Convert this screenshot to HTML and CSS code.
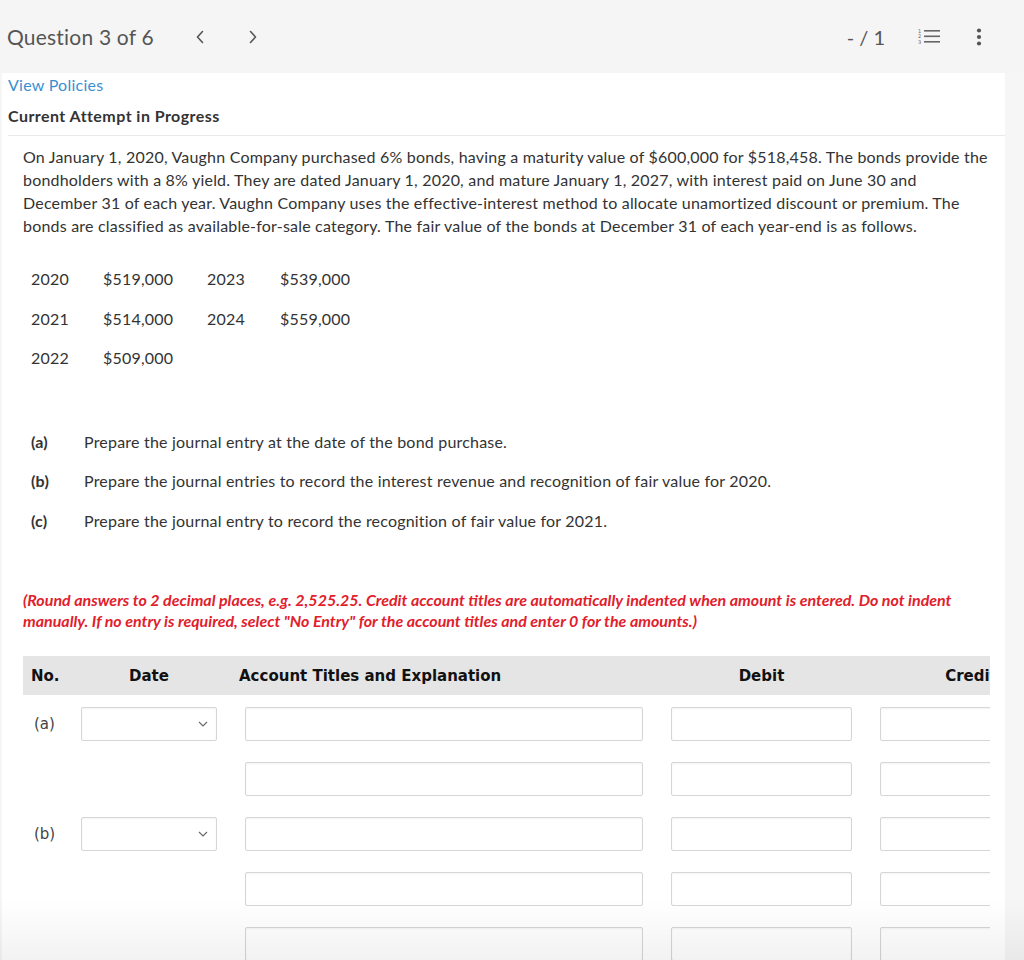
FILE: index.html
```html
<!DOCTYPE html>
<html lang="en">
<head>
<meta charset="utf-8">
<title>Question 3 of 6</title>
<link rel="stylesheet" href="styles.css">
</head>
<body>
<header class="topbar">
  <div class="qnav">
    <span class="qtitle">Question 3 of 6</span>
    <button class="navbtn prev" aria-label="Previous question">
      <svg width="10" height="14" viewBox="0 0 10 14"><path d="M7.5 1.5 L2.5 7 L7.5 12.5" fill="none" stroke="#555" stroke-width="1.6" stroke-linecap="round" stroke-linejoin="round"/></svg>
    </button>
    <button class="navbtn next" aria-label="Next question">
      <svg width="10" height="14" viewBox="0 0 10 14"><path d="M2.5 1.5 L7.5 7 L2.5 12.5" fill="none" stroke="#555" stroke-width="1.6" stroke-linecap="round" stroke-linejoin="round"/></svg>
    </button>
  </div>
  <div class="tools">
    <span class="score">- / 1</span>
    <svg class="listicon" width="22" height="17" viewBox="0 0 22 17">
      <text x="0" y="4.5" font-size="5" font-family="DejaVu Sans, sans-serif" fill="#666">1</text>
      <text x="0" y="10" font-size="5" font-family="DejaVu Sans, sans-serif" fill="#666">2</text>
      <text x="0" y="15.5" font-size="5" font-family="DejaVu Sans, sans-serif" fill="#666">3</text>
      <rect x="6" y="2" width="16" height="1.6" fill="#666"/>
      <rect x="6" y="7.5" width="16" height="1.6" fill="#666"/>
      <rect x="6" y="13" width="16" height="1.6" fill="#666"/>
    </svg>
    <svg class="dots" width="6" height="18" viewBox="0 0 6 18">
      <circle cx="3" cy="2.5" r="2.1" fill="#555"/>
      <circle cx="3" cy="9" r="2.1" fill="#555"/>
      <circle cx="3" cy="15.5" r="2.1" fill="#555"/>
    </svg>
  </div>
</header>

<main class="panel">
  <div class="attempt">
    <a class="policies" href="#">View Policies</a>
    <h2 class="status">Current Attempt in Progress</h2>
  </div>

  <section class="question">
    <p class="prompt">On January 1, 2020, Vaughn Company purchased 6% bonds, having a maturity value of $600,000 for $518,458. The bonds provide the bondholders with a 8% yield. They are dated January 1, 2020, and mature January 1, 2027, with interest paid on June 30 and December 31 of each year. Vaughn Company uses the effective-interest method to allocate unamortized discount or premium. The bonds are classified as available-for-sale category. The fair value of the bonds at December 31 of each year-end is as follows.</p>

    <div class="values">
      <span>2020</span><span>$519,000</span><span>2023</span><span>$539,000</span>
      <span>2021</span><span>$514,000</span><span>2024</span><span>$559,000</span>
      <span>2022</span><span>$509,000</span><span></span><span></span>
    </div>

    <ol class="parts">
      <li><span class="tag">(a)</span><span>Prepare the journal entry at the date of the bond purchase.</span></li>
      <li><span class="tag">(b)</span><span>Prepare the journal entries to record the interest revenue and recognition of fair value for 2020.</span></li>
      <li><span class="tag">(c)</span><span>Prepare the journal entry to record the recognition of fair value for 2021.</span></li>
    </ol>

    <p class="note">(Round answers to 2 decimal places, e.g. 2,525.25. Credit account titles are automatically indented when amount is entered. Do not indent manually. If no entry is required, select "No Entry" for the account titles and enter 0 for the amounts.)</p>

    <div class="journal">
      <div class="jgrid">
        <div class="jhead">
          <span class="hno">No.</span>
          <span class="hc">Date</span>
          <span class="hacct">Account Titles and Explanation</span>
          <span class="hc">Debit</span>
          <span class="hc">Credit</span>
        </div>

        <div class="jrow">
          <span class="no">(a)</span>
          <div class="select"><svg width="10" height="6" viewBox="0 0 10 6"><path d="M1 1 L5 5 L9 1" fill="none" stroke="#666" stroke-width="1.1"/></svg></div>
          <input class="field" type="text">
          <input class="field" type="text">
          <input class="field" type="text">
        </div>
        <div class="jrow">
          <span class="no"></span>
          <span></span>
          <input class="field" type="text">
          <input class="field" type="text">
          <input class="field" type="text">
        </div>
        <div class="jrow">
          <span class="no">(b)</span>
          <div class="select"><svg width="10" height="6" viewBox="0 0 10 6"><path d="M1 1 L5 5 L9 1" fill="none" stroke="#666" stroke-width="1.1"/></svg></div>
          <input class="field" type="text">
          <input class="field" type="text">
          <input class="field" type="text">
        </div>
        <div class="jrow">
          <span class="no"></span>
          <span></span>
          <input class="field" type="text">
          <input class="field" type="text">
          <input class="field" type="text">
        </div>
        <div class="jrow">
          <span class="no"></span>
          <span></span>
          <input class="field" type="text">
          <input class="field" type="text">
          <input class="field" type="text">
        </div>
      </div>
    </div>
  </section>
</main>
<div class="fade"></div>
</body>
</html>
```

FILE: styles.css
```css
* { box-sizing: border-box; }

html, body {
  margin: 0;
  padding: 0;
}

body {
  background: #f6f6f6;
  font-family: Lato, "Open Sans", sans-serif;
  color: #333;
  overflow: hidden;
  height: 960px;
}

/* top question bar */
.topbar {
  height: 73px;
  display: flex;
  align-items: center;
  justify-content: space-between;
  padding: 0 42px 0 7px;
  background: #f5f5f5;
}

.qnav {
  display: flex;
  align-items: center;
}

.qtitle {
  font-size: 21px;
  color: #555;
  letter-spacing: 0.2px;
}

.navbtn {
  border: 0;
  background: none;
  padding: 0;
  display: flex;
  align-items: center;
}
.navbtn.prev { margin-left: 41px; }
.navbtn.next { margin-left: 43px; }

.tools {
  display: flex;
  align-items: center;
}

.score {
  font-size: 20px;
  color: #555;
  margin-right: 33px;
}

.listicon { margin-right: 36px; }

/* white question panel */
.panel {
  margin-left: 2px;
  width: 1003px;
  background: #fff;
  padding-top: 1px;
  min-height: 900px;
}

.attempt {
  margin-left: 6px;
  border-bottom: 1px solid #e9e9e9;
  padding-bottom: 9px;
}

.policies {
  display: block;
  font-size: 16px;
  line-height: 21px;
  letter-spacing: 0.25px;
  color: #3a8fd0;
  text-decoration: none;
}

.status {
  margin: 10px 0 0;
  font-size: 16px;
  line-height: 21px;
  letter-spacing: 0.45px;
  font-weight: 700;
  color: #333;
}

.question {
  padding: 0 15px 0 21px;
  width: 1003px;
}

.prompt {
  margin: 9px 0 0;
  font-size: 16px;
  line-height: 23px;
  letter-spacing: 0.2px;
  color: #333;
}

.values {
  margin-top: 22px;
  display: grid;
  grid-template-columns: 72px 104px 73px auto;
  grid-auto-rows: 39.5px;
  align-items: center;
  padding-left: 8px;
  font-size: 16px;
  letter-spacing: 0.2px;
  color: #333;
}

.parts {
  list-style: none;
  margin: 44px 0 0;
  padding: 0 0 0 8px;
  font-size: 16px;
  letter-spacing: 0.2px;
  color: #333;
}
.parts li {
  display: grid;
  grid-template-columns: 53px auto;
  align-items: center;
  height: 39.5px;
}
.parts .tag { font-weight: 700; }

.note {
  margin: 49px 0 0;
  font-size: 16px;
  line-height: 21px;
  font-style: italic;
  font-weight: 700;
  letter-spacing: 0;
  color: #e1202b;
}

/* journal entry table */
.journal {
  margin-top: 25px;
  width: 967px;
  overflow: hidden;
}

.jgrid {
  width: 1100px;
}

.jhead,
.jrow {
  display: grid;
  grid-template-columns: 30px 136px 398px 181px 182px;
  column-gap: 28px;
  align-items: center;
}

.jhead {
  height: 39px;
  background: #e5e5e5;
  width: 967px;
  font-family: "DejaVu Sans", Verdana, sans-serif;
  font-weight: 700;
  font-size: 15px;
  color: #111;
  padding-left: 8px;
  grid-template-columns: 22px 136px 398px 181px 182px;
}

.hc { text-align: center; }
.hacct { margin-left: -6px; white-space: nowrap; }

.jrow {
  height: 34px;
  margin-top: 12px;
}
.jrow + .jrow { margin-top: 21px; }

.no {
  padding-left: 11px;
  font-family: "DejaVu Sans", Verdana, sans-serif;
  font-size: 15px;
  color: #444;
  white-space: nowrap;
}

.field,
.select {
  height: 34px;
  width: 100%;
  margin: 0;
  border: 1px solid #d6d6d6;
  border-radius: 2px;
  background: #fff;
  box-shadow: inset 0 1px 2px rgba(0, 0, 0, 0.05);
  font: inherit;
}

.select {
  display: flex;
  align-items: center;
  justify-content: flex-end;
  padding-right: 8px;
}

/* soft shade along the bottom of the scroll area */
.fade {
  position: fixed;
  left: 0;
  right: 0;
  bottom: 0;
  height: 60px;
  background: linear-gradient(to bottom, rgba(0, 0, 0, 0), rgba(0, 0, 0, 0.05));
  pointer-events: none;
}
```
